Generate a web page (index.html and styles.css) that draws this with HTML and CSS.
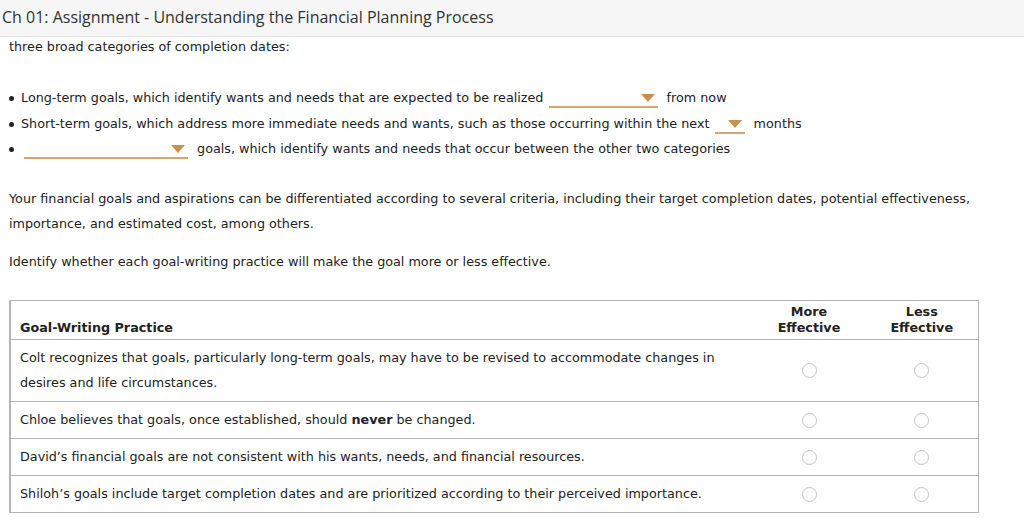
FILE: index.html
```html
<!DOCTYPE html>
<html lang="en">
<head>
    <meta charset="UTF-8">
    <title>Ch 01: Assignment - Understanding the Financial Planning Process</title>
    <link rel="stylesheet" href="styles.css">
</head>
<body>
    <div class="header">
        <h1>Ch 01: Assignment - Understanding the Financial Planning Process</h1>
    </div>

    <div class="content">
        <p class="intro">three broad categories of completion dates:</p>

        <ul class="goal-list">
            <li>Long-term goals, which identify wants and needs that are expected to be realized
                <span class="dropdown wide"><span class="arrow"></span></span> from now</li>
            <li>Short-term goals, which address more immediate needs and wants, such as those occurring within the next
                <span class="dropdown short"><span class="arrow"></span></span> months</li>
            <li><span class="dropdown long"><span class="arrow"></span></span> goals, which identify wants and needs that occur between the other two categories</li>
        </ul>

        <p class="para">Your financial goals and aspirations can be differentiated according to several criteria, including their target completion dates, potential effectiveness, importance, and estimated cost, among others.</p>

        <p class="para">Identify whether each goal-writing practice will make the goal more or less effective.</p>

        <table class="practice-table">
            <thead>
                <tr>
                    <th class="practice">Goal-Writing Practice</th>
                    <th class="choice">More<br>Effective</th>
                    <th class="choice">Less<br>Effective</th>
                </tr>
            </thead>
            <tbody>
                <tr>
                    <td class="practice">Colt recognizes that goals, particularly long-term goals, may have to be revised to accommodate changes in desires and life circumstances.</td>
                    <td class="choice"><span class="radio"></span></td>
                    <td class="choice"><span class="radio"></span></td>
                </tr>
                <tr>
                    <td class="practice">Chloe believes that goals, once established, should <b>never</b> be changed.</td>
                    <td class="choice"><span class="radio"></span></td>
                    <td class="choice"><span class="radio"></span></td>
                </tr>
                <tr>
                    <td class="practice">David&rsquo;s financial goals are not consistent with his wants, needs, and financial resources.</td>
                    <td class="choice"><span class="radio"></span></td>
                    <td class="choice"><span class="radio"></span></td>
                </tr>
                <tr>
                    <td class="practice">Shiloh&rsquo;s goals include target completion dates and are prioritized according to their perceived importance.</td>
                    <td class="choice"><span class="radio"></span></td>
                    <td class="choice"><span class="radio"></span></td>
                </tr>
            </tbody>
        </table>
    </div>
</body>
</html>
```

FILE: styles.css
```css
* {
    margin: 0;
    padding: 0;
    box-sizing: border-box;
}

body {
    font-family: "DejaVu Sans", Verdana, sans-serif;
    font-size: 12.75px;
    color: #222;
    background-color: #fff;
}

.header {
    height: 37px;
    background-color: #f6f6f6;
    border-bottom: 1px solid #e2e2e2;
    padding: 6px 0 0 2px;
}

.header h1 {
    font-family: "Open Sans", sans-serif;
    font-size: 16px;
    font-weight: 400;
    color: #333;
    line-height: 22px;
}

.content {
    padding: 0 9px;
}

.intro {
    line-height: 20px;
}

.goal-list {
    list-style: none;
    margin-top: 28px;
}

.goal-list li {
    line-height: 25.5px;
    padding-left: 12px;
    position: relative;
}

.goal-list li:before {
    content: "";
    position: absolute;
    left: 0;
    top: 11px;
    width: 5px;
    height: 5px;
    border-radius: 50%;
    background-color: #222;
}

.dropdown {
    display: inline-block;
    position: relative;
    height: 18px;
    vertical-align: -6px;
    border-bottom: 2px solid #d4a56f;
    margin: 0 5px 0 1px;
}

.dropdown.wide {
    width: 109px;
}

.dropdown.short {
    width: 30px;
}

.dropdown.long {
    width: 164px;
    margin-left: 3px;
}

.arrow {
    position: absolute;
    right: 3px;
    top: 4px;
    width: 0;
    height: 0;
    border-left: 7px solid transparent;
    border-right: 7px solid transparent;
    border-top: 8px solid #c8904f;
}

.para {
    line-height: 25px;
    margin-top: 13px;
}

.goal-list + .para {
    margin-top: 24px;
}

.practice-table {
    width: 970px;
    margin-top: 26px;
    border-collapse: collapse;
    border: 1px solid #b5b5b5;
    border-left-width: 2px;
}

.practice-table th {
    font-weight: 700;
    line-height: 16px;
    padding: 3px 9px 3px;
    vertical-align: bottom;
}

.practice-table th.practice {
    text-align: left;
}

.practice-table td {
    border-top: 1px solid #b5b5b5;
    line-height: 25px;
    padding: 5px 9px 6px;
    vertical-align: middle;
}

.practice-table .choice {
    width: 113px;
    text-align: center;
    padding-left: 0;
    padding-right: 0;
}

.radio {
    display: inline-block;
    width: 15px;
    height: 15px;
    border: 1px solid #c4c4c4;
    border-radius: 50%;
    vertical-align: middle;
}
```
